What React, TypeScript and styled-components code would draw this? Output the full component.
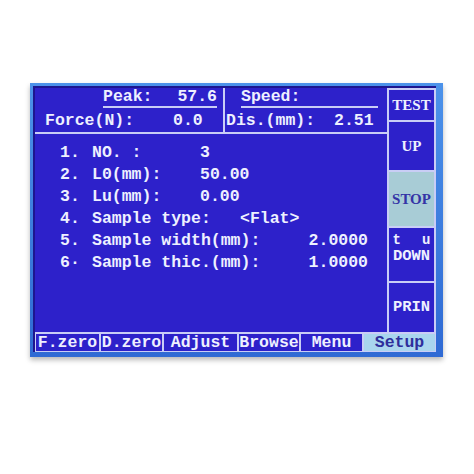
import styled, { createGlobalStyle } from "styled-components";

const GlobalStyle = createGlobalStyle`
  html, body {
    margin: 0;
    padding: 0;
    background: #ffffff;
  }
  body {
    width: 474px;
    height: 474px;
    overflow: hidden;
  }
`;

const LINE = "#c9cdf6";
const LCD = "#2d21ca";
const INK = "#eef0ff";

const Page = styled.div`
  width: 474px;
  height: 474px;
  box-sizing: border-box;
  padding: 83px 0 0 30px;
  background: #ffffff;
  font-family: "Liberation Mono", "DejaVu Sans Mono", monospace;
  font-weight: bold;
  color: ${INK};
`;

const Screen = styled.div`
  width: 413px;
  box-sizing: border-box;
  padding: 3px 7px 5px 3px;
  background: linear-gradient(180deg, #4c92ea, #2f6ad4);
  box-shadow: 0 3px 5px rgba(0, 0, 0, 0.28);
`;

const Inner = styled.div`
  display: grid;
  grid-template-columns: 352px 49px;
  grid-template-rows: 46px 198px 20px;
  grid-template-areas:
    "head side"
    "body side"
    "foot foot";
  background: ${LCD};
  border-left: 2px solid #1d168f;
  border-top: 2px solid #1d168f;
`;

const Header = styled.div`
  grid-area: head;
  display: grid;
  grid-template-columns: 190px 162px;
  border-bottom: 2px solid ${LINE};
  font-size: 16.5px;
  line-height: 18px;
`;

const HeadCol = styled.div<{ $divider?: boolean }>`
  display: flex;
  flex-direction: column;
  border-right: ${({ $divider }) => ($divider ? `2px solid ${LINE}` : "none")};
`;

const Titled = styled.div<{ $indent: number; $width: number }>`
  margin-left: ${({ $indent }) => $indent}px;
  width: ${({ $width }) => $width}px;
  height: 18px;
  display: flex;
  justify-content: space-between;
  border-bottom: 2px solid ${LINE};
`;

const Reading = styled.div<{ $indent: number; $label: number }>`
  display: grid;
  grid-template-columns: ${({ $label }) => $label}px auto;
  padding: 4px 0 0 ${({ $indent }) => $indent}px;
  white-space: pre;
`;

const Body = styled.div`
  grid-area: body;
  padding: 8px 0 0 25px;
  font-size: 16.5px;
`;

const Row = styled.div<{ $label: number; $end?: boolean }>`
  display: grid;
  grid-template-columns: 32px ${({ $label }) => $label}px 1fr;
  width: 308px;
  height: 22px;
  line-height: 22px;
  white-space: pre;

  & > span:last-child {
    justify-self: ${({ $end }) => ($end ? "end" : "start")};
  }
`;

const Side = styled.div`
  grid-area: side;
  display: flex;
  flex-direction: column;
  border-left: 2px solid ${LINE};
  border-right: 2px solid ${LINE};
  border-top: 2px solid ${LINE};
  box-sizing: border-box;
`;

const SideKey = styled.div<{ $h: number; $on?: boolean; $serif?: boolean; $top?: boolean }>`
  height: ${({ $h }) => $h}px;
  flex: none;
  box-sizing: border-box;
  display: flex;
  flex-direction: column;
  align-items: center;
  justify-content: ${({ $top }) => ($top ? "flex-start" : "center")};
  padding-top: ${({ $top }) => ($top ? "4px" : "0")};
  border-bottom: 2px solid ${LINE};
  background: ${({ $on }) => ($on ? "#a8ccd6" : "transparent")};
  color: ${({ $on }) => ($on ? "#3434a6" : INK)};
  font-family: ${({ $serif }) =>
    $serif ? `"Liberation Serif", "DejaVu Serif", serif` : `"Liberation Mono", monospace`};
  font-size: ${({ $serif }) => ($serif ? "15px" : "15.5px")};
  line-height: 17px;

  &:last-child {
    border-bottom: none;
  }
`;

const Arrows = styled.div`
  width: 38px;
  display: flex;
  justify-content: space-between;
  font-size: 14px;
  line-height: 16px;
`;

const Foot = styled.div`
  grid-area: foot;
  display: grid;
  grid-template-columns: 65px 63px 75px 62px 63px 73px;
  border-top: 2px solid ${LINE};
  box-sizing: border-box;
`;

const FootKey = styled.div<{ $on?: boolean }>`
  box-sizing: border-box;
  display: flex;
  align-items: center;
  justify-content: center;
  border-right: 1px solid ${LINE};
  border-left: 1px solid ${LINE};
  border-bottom: 1px solid ${LINE};
  font-size: 16.5px;
  line-height: 17px;
  white-space: nowrap;
  overflow: visible;
  background: ${({ $on }) => ($on ? "#a9d5ee" : "transparent")};
  color: ${({ $on }) => ($on ? "#2e2e9c" : INK)};
`;

const params = [
  { no: "1.", label: "NO. :", value: "3", w: 108 },
  { no: "2.", label: "L0(mm):", value: "50.00", w: 108 },
  { no: "3.", label: "Lu(mm):", value: "0.00", w: 108 },
  { no: "4.", label: "Sample type:", value: "<Flat>", w: 148 },
  { no: "5.", label: "Sample width(mm):", value: "2.0000", w: 200, end: true },
  { no: "6·", label: "Sample thic.(mm):", value: "1.0000", w: 200, end: true },
];

const footKeys = ["F.zero", "D.zero", "Adjust", "Browse", "Menu", "Setup"];

export default function App() {
  return (
    <Page>
      <GlobalStyle />
      <Screen>
        <Inner>
          <Header>
            <HeadCol $divider>
              <Titled $indent={68} $width={114}>
                <span>Peak:</span>
                <span>57.6</span>
              </Titled>
              <Reading $indent={10} $label={128}>
                <span>Force(N):</span>
                <span>0.0</span>
              </Reading>
            </HeadCol>
            <HeadCol>
              <Titled $indent={16} $width={137}>
                <span>Speed:</span>
              </Titled>
              <Reading $indent={1} $label={108}>
                <span>Dis.(mm):</span>
                <span>2.51</span>
              </Reading>
            </HeadCol>
          </Header>

          <Body>
            {params.map((p) => (
              <Row key={p.no} $label={p.w} $end={p.end}>
                <span>{p.no}</span>
                <span>{p.label}</span>
                <span>{p.value}</span>
              </Row>
            ))}
          </Body>

          <Side>
            <SideKey $h={32} $serif>TEST</SideKey>
            <SideKey $h={50} $serif>UP</SideKey>
            <SideKey $h={56} $on $serif>STOP</SideKey>
            <SideKey $h={55} $top>
              <Arrows>
                <span>t</span>
                <span>u</span>
              </Arrows>
              <span>DOWN</span>
            </SideKey>
            <SideKey $h={49}>PRIN</SideKey>
          </Side>

          <Foot>
            {footKeys.map((k) => (
              <FootKey key={k} $on={k === "Setup"}>
                {k}
              </FootKey>
            ))}
          </Foot>
        </Inner>
      </Screen>
    </Page>
  );
}
